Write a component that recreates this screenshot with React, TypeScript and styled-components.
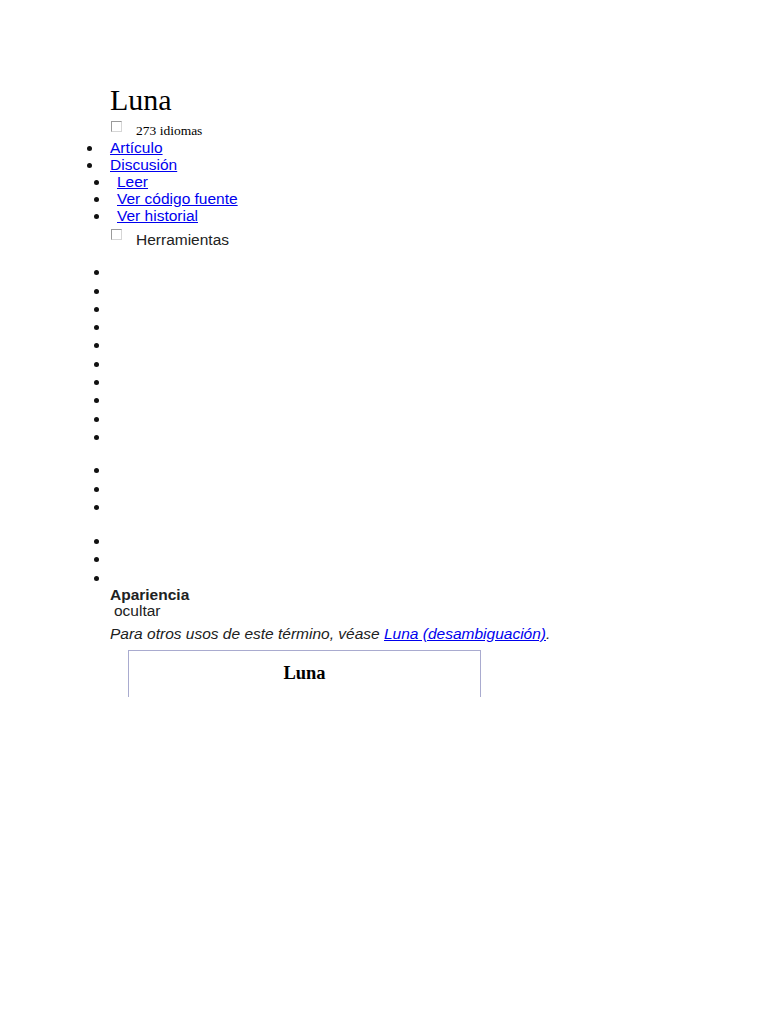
import React from 'react';
import styled, { createGlobalStyle } from 'styled-components';

const GlobalStyle = createGlobalStyle`
  html, body {
    margin: 0;
    padding: 0;
    background: #fff;
  }
  body {
    font-family: 'Liberation Sans', Arial, sans-serif;
    font-size: 15.5px;
    color: #000;
  }
`;

const Page = styled.div`
  width: 768px;
  padding-top: 82px;
`;

const Column = styled.div`
  margin-left: 110px;
`;

const Title = styled.h1`
  margin: 0;
  font-family: 'Liberation Serif', 'Times New Roman', serif;
  font-weight: normal;
  font-size: 30px;
  line-height: 36px;
`;

const ToggleRow = styled.div<{ $serif?: boolean }>`
  display: flex;
  align-items: flex-start;
  margin-top: ${(p) => (p.$serif ? '2px' : '4px')};
  height: ${(p) => (p.$serif ? '18.5px' : '20px')};
  font-family: ${(p) =>
    p.$serif
      ? "'Liberation Serif', 'Times New Roman', serif"
      : "'Liberation Sans', Arial, sans-serif"};
  font-size: ${(p) => (p.$serif ? '13.5px' : '15.5px')};
  color: ${(p) => (p.$serif ? '#000' : '#222')};
`;

const FakeCheck = styled.span`
  display: inline-block;
  width: 9px;
  height: 9px;
  margin: 1px 14px 0 1px;
  border: 1px solid #9a9a9a;
  border-right-color: #d6d6d6;
  border-bottom-color: #d6d6d6;
  flex: none;
`;

const ToggleLabel = styled.span<{ $drop: number }>`
  padding-top: ${(p) => p.$drop}px;
  line-height: 1;
`;

const List = styled.ul<{ $indent: number; $lh: number; $gapTop?: number }>`
  margin: ${(p) => p.$gapTop ?? 0}px 0 0 ${(p) => p.$indent}px;
  padding: 0;
  list-style: none;
  line-height: ${(p) => p.$lh}px;
`;

const Item = styled.li`
  &::before {
    content: '';
    display: inline-block;
    width: 5px;
    height: 5px;
    border-radius: 50%;
    background: #111;
    margin-left: -23px;
    margin-right: 18px;
    vertical-align: middle;
  }
`;

const Link = styled.a`
  color: #0000ee;
  text-decoration: underline;
`;

const Appearance = styled.div`
  line-height: 16px;
`;

const Heading = styled.div`
  font-weight: bold;
  color: #202122;
`;

const Hide = styled.div`
  padding-left: 4px;
  color: #202122;
`;

const Note = styled.div`
  margin-top: 6px;
  font-style: italic;
  color: #202122;
  line-height: 18px;
`;

const Infobox = styled.div`
  box-sizing: border-box;
  width: 353px;
  height: 47px;
  margin: 7px 0 0 18px;
  border: 1px solid #a9abcf;
  border-bottom: none;
  text-align: center;
`;

const Caption = styled.div`
  padding-top: 12px;
  font-family: 'Liberation Serif', 'Times New Roman', serif;
  font-weight: bold;
  font-size: 18.5px;
`;

const emptyGroups = [
  { count: 10, gap: 15.35 },
  { count: 3, gap: 15 },
  { count: 3, gap: 16 },
];

export default function App() {
  return (
    <>
      <GlobalStyle />
      <Page>
        <Column>
          <Title>Luna</Title>
          <ToggleRow $serif>
            <FakeCheck />
            <ToggleLabel $drop={4}>273 idiomas</ToggleLabel>
          </ToggleRow>
        </Column>
        <List $indent={110} $lh={17}>
          <Item>
            <Link href="#">Artículo</Link>
          </Item>
          <Item>
            <Link href="#">Discusión</Link>
          </Item>
        </List>
        <List $indent={117} $lh={17}>
          <Item>
            <Link href="#">Leer</Link>
          </Item>
          <Item>
            <Link href="#">Ver código fuente</Link>
          </Item>
          <Item>
            <Link href="#">Ver historial</Link>
          </Item>
        </List>
        <Column>
          <ToggleRow>
            <FakeCheck />
            <ToggleLabel $drop={4}>Herramientas</ToggleLabel>
          </ToggleRow>
        </Column>
        {emptyGroups.map((group, g) => (
          <List key={g} $indent={117} $lh={18.3} $gapTop={group.gap}>
            {Array.from({ length: group.count }, (_, i) => (
              <Item key={i}>&nbsp;</Item>
            ))}
          </List>
        ))}
        <Column>
          <Appearance>
            <Heading>Apariencia</Heading>
            <Hide>ocultar</Hide>
          </Appearance>
          <Note>
            Para otros usos de este término, véase{' '}
            <Link href="#">Luna (desambiguación)</Link>.
          </Note>
          <Infobox>
            <Caption>Luna</Caption>
          </Infobox>
        </Column>
      </Page>
    </>
  );
}
